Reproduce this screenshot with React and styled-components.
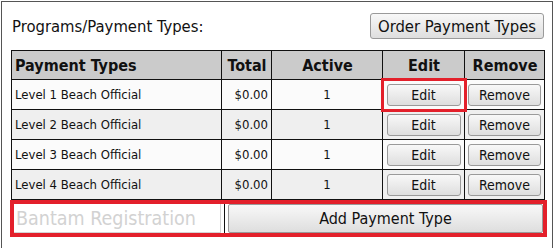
import React from "react";
import styled, { createGlobalStyle, css } from "styled-components";

const Global = createGlobalStyle`
  html, body { margin: 0; padding: 0; background: #fff; }
  body { font-family: "DejaVu Sans Condensed", "DejaVu Sans", sans-serif; color: #111; }
`;

const Panel = styled.div`
  margin: 1px 0 0 1px;
  width: 552px;
  height: 247px;
  border: 1px solid #555;
  border-bottom: none;
  padding: 11px 10px 0 9px;
  box-sizing: border-box;
  overflow: hidden;
`;

const TopBar = styled.div`
  display: flex;
  justify-content: space-between;
  align-items: center;
  height: 26px;
  margin: 0 -2px 11px 0;
`;

const Title = styled.div`
  font-size: 16.5px;
  padding-left: 1px;
`;

const btnBase = css`
  font-family: inherit;
  color: #111;
  border: 1px solid #9a9a9a;
  border-radius: 3px;
  background: linear-gradient(#f8f8f8, #dedede);
  box-sizing: border-box;
  padding: 0;
  cursor: pointer;
`;

const OrderButton = styled.button`
  ${btnBase};
  height: 26px;
  width: 174px;
  font-size: 16.5px;
`;

const Table = styled.table`
  width: 533px;
  border-collapse: collapse;
  table-layout: fixed;
  font-size: 13px;
`;

const Th = styled.th`
  background: #cbcbcb;
  border: 1px solid #111;
  font-size: 16px;
  font-weight: bold;
  height: 28px;
  padding: 0 2px 0 3px;
  text-align: ${(p) => p.$align || "center"};
  white-space: nowrap;
  overflow: hidden;
`;

const Tr = styled.tr`
  background: ${(p) => (p.$alt ? "#efefef" : "#fbfbfb")};
`;

const Td = styled.td`
  border: 1px solid #111;
  height: 29px;
  padding: 0 3px;
  text-align: ${(p) => p.$align || "left"};
  white-space: nowrap;
  position: relative;
  ${(p) =>
    p.$highlight &&
    css`
      &::after {
        content: "";
        position: absolute;
        left: -2px;
        right: -3px;
        top: -2px;
        bottom: -3px;
        border: 3px solid #e3202b;
        pointer-events: none;
      }
    `}
`;

const BtnCell = styled(Td)`
  padding: 0;
  text-align: center;
`;

const RowButton = styled.button`
  ${btnBase};
  height: 22px;
  width: ${(p) => p.$w}px;
  font-size: 14px;
  vertical-align: middle;
`;

const AddRow = styled.div`
  display: flex;
  margin-left: -1px;
  width: 537px;
  height: 37px;
  border: 4px solid #e3202b;
  box-sizing: border-box;
  background: #fff;
`;

const InputCell = styled.div`
  width: 207px;
  display: flex;
  border-right: 1px solid #111;
  padding-right: 3px;
`;

const NameInput = styled.input`
  flex: 1;
  min-width: 0;
  height: 100%;
  box-sizing: border-box;
  border: 1px solid #d4d4d4;
  border-left: none;
  border-top: none;
  margin: 0;
  padding: 0 0 0 2px;
  font-family: inherit;
  font-size: 19.5px;
  outline: none;
  &::placeholder { color: #d2d2d2; }
`;

const ButtonCell = styled.div`
  flex: 1;
  display: flex;
  padding-left: 3px;
`;

const AddButton = styled.button`
  ${btnBase};
  flex: 1;
  height: 100%;
  font-size: 16px;
  border-radius: 2px;
`;

const rows = [1, 2, 3, 4];

export default function App() {
  return (
    <>
      <Global />
      <Panel>
        <TopBar>
          <Title>Programs/Payment Types:</Title>
          <OrderButton>Order Payment Types</OrderButton>
        </TopBar>
        <Table>
          <colgroup>
            <col style={{ width: 210 }} />
            <col style={{ width: 50 }} />
            <col style={{ width: 111 }} />
            <col style={{ width: 82 }} />
            <col style={{ width: 80 }} />
          </colgroup>
          <thead>
            <tr>
              <Th $align="left">Payment Types</Th>
              <Th>Total</Th>
              <Th>Active</Th>
              <Th>Edit</Th>
              <Th>Remove</Th>
            </tr>
          </thead>
          <tbody>
            {rows.map((n, i) => (
              <Tr key={n} $alt={i % 2 === 1}>
                <Td>Level {n} Beach Official</Td>
                <Td $align="right">$0.00</Td>
                <Td $align="center">1</Td>
                <BtnCell $highlight={i === 0}>
                  <RowButton $w={74}>Edit</RowButton>
                </BtnCell>
                <BtnCell>
                  <RowButton $w={73}>Remove</RowButton>
                </BtnCell>
              </Tr>
            ))}
          </tbody>
        </Table>
        <AddRow>
          <InputCell>
            <NameInput placeholder="Bantam Registration" />
          </InputCell>
          <ButtonCell>
            <AddButton>Add Payment Type</AddButton>
          </ButtonCell>
        </AddRow>
      </Panel>
    </>
  );
}
